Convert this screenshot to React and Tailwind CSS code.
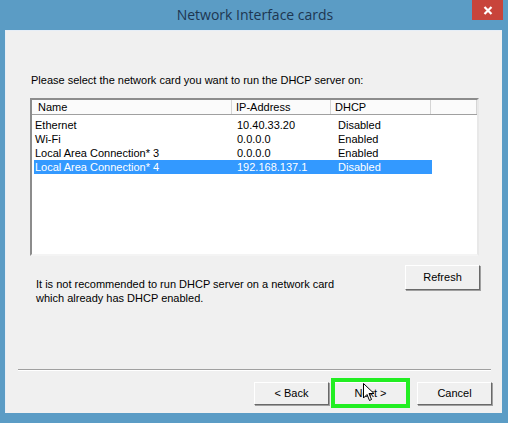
import React from 'react';

const rows = [
    { name: 'Ethernet', ip: '10.40.33.20', dhcp: 'Disabled' },
    { name: 'Wi-Fi', ip: '0.0.0.0', dhcp: 'Enabled' },
    { name: 'Local Area Connection* 3', ip: '0.0.0.0', dhcp: 'Enabled' },
    { name: 'Local Area Connection* 4', ip: '192.168.137.1', dhcp: 'Disabled', selected: true },
];

// classic raised win32 button
const Btn = ({ children, className = '' }) => (
    <button
        className={`h-[23px] w-[75px] bg-[#f0f0f0] border border-t-white border-l-white border-r-[#696969] border-b-[#696969] shadow-[1px_1px_0_#a0a0a0] text-[11px] text-black leading-none ${className}`}
    >
        {children}
    </button>
);

const HeaderCell = ({ children, className = '' }) => (
    <div className={`h-full flex items-center border-r border-[#d5d5d5] pl-[4px] ${className}`}>
        {children}
    </div>
);

const App = () => {
    return (
        <div
            className="w-[508px] h-[423px] bg-[#5b9cc5] flex flex-col overflow-hidden"
            style={{ fontFamily: '"Liberation Sans", Arial, sans-serif' }}
        >
            {/* title bar */}
            <div className="relative h-[30px] shrink-0 flex items-center justify-center">
                <span
                    className="text-[14px] text-[#1d3651] pb-[1px] ml-[2px]"
                    style={{ fontFamily: '"Open Sans", "Noto Sans", sans-serif' }}
                >
                    Network Interface cards
                </span>
                <div className="absolute right-[5px] top-0 w-[31px] h-[20px] bg-[#c8443b] flex items-center justify-center">
                    <svg width="10" height="9" viewBox="0 0 10 9">
                        <path d="M1.5 1 L8.5 8 M8.5 1 L1.5 8" stroke="white" strokeWidth="2.2" />
                    </svg>
                </div>
            </div>

            {/* client area */}
            <div className="relative ml-[5px] mr-[6px] mb-[10px] flex-1 bg-[#f0f0f0] border-l border-t border-[#e6eef7] flex flex-col text-[11px] text-black">
                <p className="mt-[42px] ml-[25px] leading-[14px]">
                    Please select the network card you want to run the DHCP server on:
                </p>

                {/* list view */}
                <div className="mt-[11px] ml-[24px] w-[449px] h-[158px] bg-white border-2 border-t-[#8c8c8c] border-l-[#8c8c8c] border-r-[#e8e8e8] border-b-[#f4f4f4] flex flex-col">
                    <div className="h-[15px] flex border-b border-[#a0a0a0] bg-[#fbfbfb] shrink-0">
                        <HeaderCell className="w-[200px] pl-[6px]">Name</HeaderCell>
                        <HeaderCell className="w-[99px]">IP-Address</HeaderCell>
                        <HeaderCell className="w-[100px]">DHCP</HeaderCell>
                        <HeaderCell className="w-[46px]" />
                    </div>
                    <div className="pt-[3px] flex flex-col">
                        {rows.map((r) => (
                            <div
                                key={r.name}
                                className={`h-[14px] flex items-center w-[398px] ml-[2px] ${r.selected ? 'bg-[#3399ff] text-white' : ''}`}
                            >
                                <span className="w-[200px] pl-[1px]">{r.name}</span>
                                <span className="w-[100px] pl-[3px]">{r.ip}</span>
                                <span className="pl-[4px]">{r.dhcp}</span>
                            </div>
                        ))}
                    </div>
                </div>

                {/* notice + refresh */}
                <div className="mt-[9px] ml-[24px] w-[450px] h-[40px] flex justify-between items-start">
                    <p className="mt-[12px] ml-[6px] leading-[14px]">
                        It is not recommended to run DHCP server on a network card
                        <br />
                        which already has DHCP enabled.
                    </p>
                    <Btn className="h-[25px] w-[74px]">Refresh</Btn>
                </div>

                {/* separator */}
                <div className="mt-[64px] ml-[12px] mr-[11px] h-[2px] border-t border-[#a0a0a0] border-b border-b-white" />

                {/* wizard buttons */}
                <div className="mt-[11px] pr-[10px] flex justify-end">
                    <Btn>&lt; Back</Btn>
                    <Btn className="ml-[4px]">Next &gt;</Btn>
                    <Btn className="ml-[9px]">Cancel</Btn>
                </div>

                {/* green highlight around Next */}
                <div className="absolute left-[325px] top-[347px] w-[79px] h-[30px] border-[4px] border-[#22ee22]" />

                {/* mouse cursor */}
                <svg className="absolute left-[357px] top-[352px]" width="12" height="19" viewBox="0 0 12 19">
                    <path d="M0.5 0.5 L0.5 15 L4 11.5 L6.5 17.5 L8.5 16.5 L6 10.5 L11 10.5 Z" fill="white" stroke="black" strokeWidth="1" />
                </svg>
            </div>
        </div>
    );
};

export default App;
